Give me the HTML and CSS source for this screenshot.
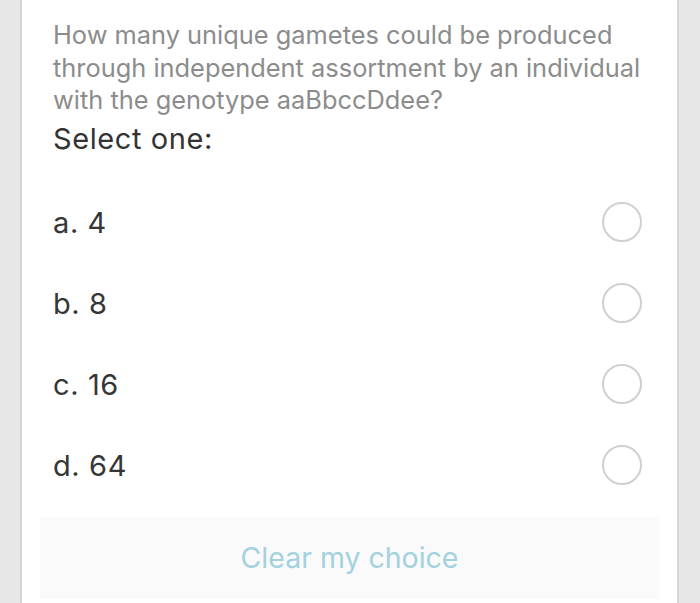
FILE: index.html
```html
<!DOCTYPE html>
<html>
<head>
<meta charset="utf-8">
<link rel="stylesheet" href="styles.css">
</head>
<body>
<div class="panel">
  <div class="question">
    <p class="qtext">How many unique gametes could be produced through independent assortment by an individual with the genotype aaBbccDdee?</p>
    <p class="prompt">Select one:</p>
  </div>
  <div class="options">
    <div class="option"><span class="label">a. 4</span><span class="radio"></span></div>
    <div class="option"><span class="label">b. 8</span><span class="radio"></span></div>
    <div class="option"><span class="label">c. 16</span><span class="radio"></span></div>
    <div class="option"><span class="label">d. 64</span><span class="radio"></span></div>
  </div>
  <div class="clear">Clear my choice</div>
</div>
</body>
</html>
```
FILE: styles.css
```css
html, body {
  margin: 0;
  padding: 0;
  height: 603px;
  overflow: hidden;
}
body {
  background: #e7e7e7;
  font-family: Inter, "Liberation Sans", Arial, sans-serif;
}
.panel {
  margin: 0 21px 0 20px;
  height: 603px;
  background: #ffffff;
  border-left: 2px solid #d6d6d6;
  border-right: 2px solid #d6d6d6;
  box-sizing: border-box;
  display: flex;
  flex-direction: column;
}
.question {
  padding: 19px 20px 0 31px;
}
.qtext {
  margin: 0;
  font-size: 25.4px;
  line-height: 32.5px;
  color: #8c8c8c;
  width: 600px;
}
.prompt {
  margin: 0;
  font-size: 29px;
  letter-spacing: 0.6px;
  line-height: 44px;
  color: #333333;
}
.options {
  display: flex;
  flex-direction: column;
  padding-top: 21px;
}
.option {
  height: 81px;
  display: flex;
  align-items: center;
  justify-content: space-between;
  padding: 0 35px 0 31px;
}
.label {
  font-size: 29px;
  letter-spacing: 0.6px;
  color: #363636;
}
.radio {
  width: 40px;
  height: 40px;
  border: 2px solid #d0d0d0;
  border-radius: 50%;
  box-sizing: border-box;
}
.clear {
  margin: 11px 18px 0 18px;
  height: 82px;
  background: #fafafa;
  display: flex;
  align-items: center;
  justify-content: center;
  font-size: 28.5px;
  color: #a3d2de;
}
```
